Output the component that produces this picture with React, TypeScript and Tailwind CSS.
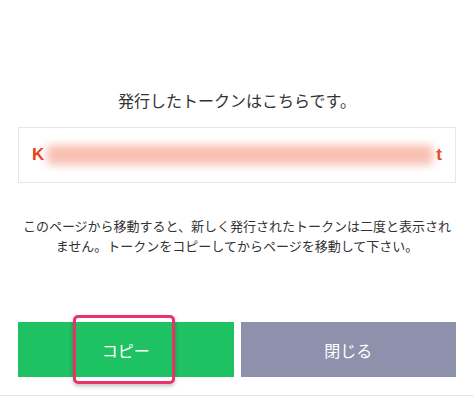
import React from "react";

export default function App() {
  const jp = { fontFamily: '"Noto Sans CJK JP", "Noto Sans", sans-serif' };

  return (
    <main className="w-[474px] h-[397px] bg-white overflow-hidden flex flex-col" style={jp}>
      <div className="flex flex-col px-[18px] pt-[88px]">
        {/* title */}
        <h2 className="text-center text-[16px] leading-[24px] text-[#333]">発行したトークンはこちらです。</h2>

        {/* token */}
        <div className="mt-[15px] h-[56px] border border-[#e6e6e6] flex items-center px-[13px]">
          <span className="text-[17px] font-bold text-[#e5401c]" style={{ fontFamily: '"Liberation Sans", sans-serif' }}>K</span>
          <div className="flex-1 mx-[3px] h-[20px] bg-[#f9c0b2] blur-[4px] rounded-sm" />
          <span className="text-[17px] font-bold text-[#e5401c]" style={{ fontFamily: '"Liberation Sans", sans-serif' }}>t</span>
        </div>

        {/* notice */}
        <p className="mt-[33px] text-center text-[13px] leading-[20px] text-[#333]">
          このページから移動すると、新しく発行されたトークンは二度と表示され
          <br />
          ません。トークンをコピーしてからページを移動して下さい。
        </p>

        {/* buttons */}
        <div className="mt-[66px] flex gap-[7px]">
          <div className="relative flex-1">
            <button className="w-full h-[55px] bg-[#1fc262] text-white text-[16px]">コピー</button>
            <div className="absolute left-[55px] top-[-7px] w-[102px] h-[69px] border-[3px] border-[#e8336a] rounded-[5px] shadow-[0_2px_4px_rgba(0,0,0,0.25)]" />
          </div>
          <button className="flex-1 h-[55px] bg-[#8e91ab] text-white text-[16px]">閉じる</button>
        </div>
      </div>
      <div className="mt-[18px] border-t border-[#e8e8e8]" />
    </main>
  );
}
